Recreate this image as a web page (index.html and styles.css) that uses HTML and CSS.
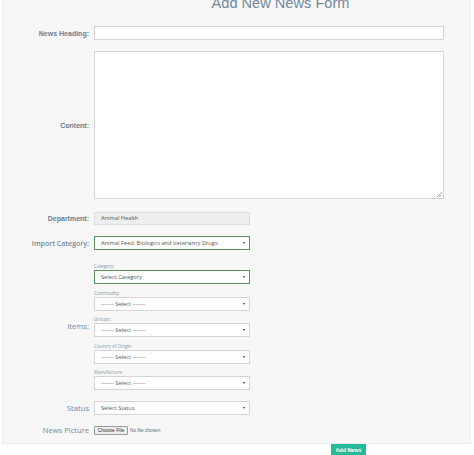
FILE: index.html
```html
<!DOCTYPE html>
<html lang="en">
<head>
<meta charset="utf-8">
<title>Add New News Form</title>
<link rel="stylesheet" href="styles.css">
</head>
<body>
<div class="panel">
  <h1 class="title">Add New News Form</h1>
  <form class="form">
    <div class="row r-heading">
      <label class="lbl bold">News Heading:</label>
      <div class="field"><div class="input wide"></div></div>
    </div>
    <div class="row r-content">
      <label class="lbl bold">Content:</label>
      <div class="field"><div class="textarea"><span class="grip"></span></div></div>
    </div>
    <div class="row r-dept">
      <label class="lbl bold">Department:</label>
      <div class="field"><div class="input half disabled">Animal Health</div></div>
    </div>
    <div class="row r-import">
      <label class="lbl big semi">Import Category:</label>
      <div class="field"><div class="select half ok">Animal Feed, Biologics and Veterianry Drugs</div></div>
    </div>
    <div class="row r-items">
      <label class="lbl big">Items:</label>
      <div class="field">
        <div class="sub"><div class="sublbl">Category:</div><div class="select half ok">Select Category</div></div>
        <div class="sub"><div class="sublbl">Commodity:</div><div class="select half">------- Select -------</div></div>
        <div class="sub"><div class="sublbl">Groups:</div><div class="select half">------- Select -------</div></div>
        <div class="sub"><div class="sublbl">Country of Origin:</div><div class="select half">------- Select -------</div></div>
        <div class="sub last"><div class="sublbl">Manufacture:</div><div class="select half">------- Select -------</div></div>
      </div>
    </div>
    <div class="row r-status">
      <label class="lbl big">Status</label>
      <div class="field"><div class="select half">Select Status</div></div>
    </div>
    <div class="row r-file">
      <label class="lbl big">News Picture</label>
      <div class="field file"><span class="file-btn">Choose File</span><span class="file-name">No file chosen</span></div>
    </div>
    <div class="row r-btn">
      <span class="lbl"></span>
      <div class="field"><button type="button" class="btn">Add News</button></div>
    </div>
  </form>
</div>
</body>
</html>
```

FILE: styles.css
```css
html, body {
  margin: 0;
  padding: 0;
  background: #ffffff;
}
body {
  font-family: "Open Sans", "Liberation Sans", sans-serif;
  color: #73879c;
  width: 474px;
  height: 455px;
  overflow: hidden;
}
.panel {
  box-sizing: border-box;
  margin-left: 2px;
  width: 469px;
  height: 448px;
  background: #f7f7f7;
  border-left: 1px solid #eeeeee;
  border-right: 1px solid #eeeeee;
  border-bottom: 1px solid #eeeeee;
}
.title {
  margin: -4px 0 0 0;
  padding-left: 88px;
  font-family: "Liberation Sans", Arial, sans-serif;
  font-weight: 400;
  font-size: 14.6px;
  line-height: 15px;
  height: 15px;
  text-align: center;
  color: #73879c;
}
.form {
  margin: 0;
}
.row {
  display: flex;
  align-items: center;
}
.lbl {
  box-sizing: border-box;
  width: 91px;
  flex: none;
  padding-right: 5px;
  text-align: right;
  color: #73879c;
}
.lbl.bold {
  font-family: "Liberation Sans", Arial, sans-serif;
  font-weight: 700;
  font-size: 7px;
  color: #6b7d90;
}
.lbl.big {
  font-family: "Open Sans", sans-serif;
  font-size: 7.6px;
  font-weight: 400;
}
.lbl.semi {
  font-weight: 600;
  font-size: 7px;
}
.field {
  flex: none;
}
.r-heading { margin-top: 15px; }
.r-content { margin-top: 11px; }
.r-dept { margin-top: 13px; }
.r-import { margin-top: 11px; }
.r-items { margin-top: 12px; }
.r-status { margin-top: 11px; }
.r-file { margin-top: 10px; }
.r-btn { margin-top: 9px; }

.input, .select, .textarea {
  box-sizing: border-box;
  background: #ffffff;
  border: 1px solid #d4d4d4;
  font-family: "Open Sans", sans-serif;
  font-size: 5.7px;
  color: #555555;
}
.input.wide {
  width: 350px;
  height: 14px;
}
.textarea {
  position: relative;
  width: 350px;
  height: 148px;
}
.grip {
  position: absolute;
  right: 1px;
  bottom: 1px;
  width: 5px;
  height: 5px;
  background: linear-gradient(135deg, transparent 45%, #aaaaaa 45%, #aaaaaa 55%, transparent 55%, transparent 70%, #aaaaaa 70%, #aaaaaa 80%, transparent 80%);
}
.half {
  width: 156px;
  height: 14px;
  line-height: 12px;
  padding-left: 6px;
}
.input.disabled {
  height: 13px;
  line-height: 11px;
  background: #eeeeee;
  border-color: #dddddd;
}
.select {
  position: relative;
}
.select::after {
  content: "";
  position: absolute;
  right: 4px;
  top: 5px;
  border-left: 1.6px solid transparent;
  border-right: 1.6px solid transparent;
  border-top: 2.8px solid #333333;
}
.select.ok {
  border-color: #5e8f5e;
}
.sub {
  margin-bottom: 4.5px;
}
.sub.last {
  margin-bottom: 0;
}
.sublbl {
  font-family: "Open Sans", sans-serif;
  font-size: 4.6px;
  line-height: 8px;
  height: 8px;
  color: #8a98a8;
}
.file {
  display: flex;
  align-items: center;
  height: 10px;
}
.file-btn {
  box-sizing: border-box;
  height: 9px;
  width: 34px;
  border: 1px solid #9a9a9a;
  border-radius: 1px;
  background: #efefef;
  font-family: "Liberation Sans", Arial, sans-serif;
  font-size: 5px;
  line-height: 7px;
  text-align: center;
  color: #333333;
}
.file-name {
  margin-left: 2px;
  font-family: "Liberation Sans", Arial, sans-serif;
  font-size: 4.8px;
  color: #666666;
}
.btn {
  display: block;
  margin-left: 237px;
  width: 35px;
  height: 12px;
  padding: 0;
  border: none;
  border-radius: 1px;
  background: #26b99a;
  color: #ffffff;
  font-family: "Liberation Sans", Arial, sans-serif;
  font-weight: 700;
  font-size: 5.4px;
  line-height: 12px;
}
```
